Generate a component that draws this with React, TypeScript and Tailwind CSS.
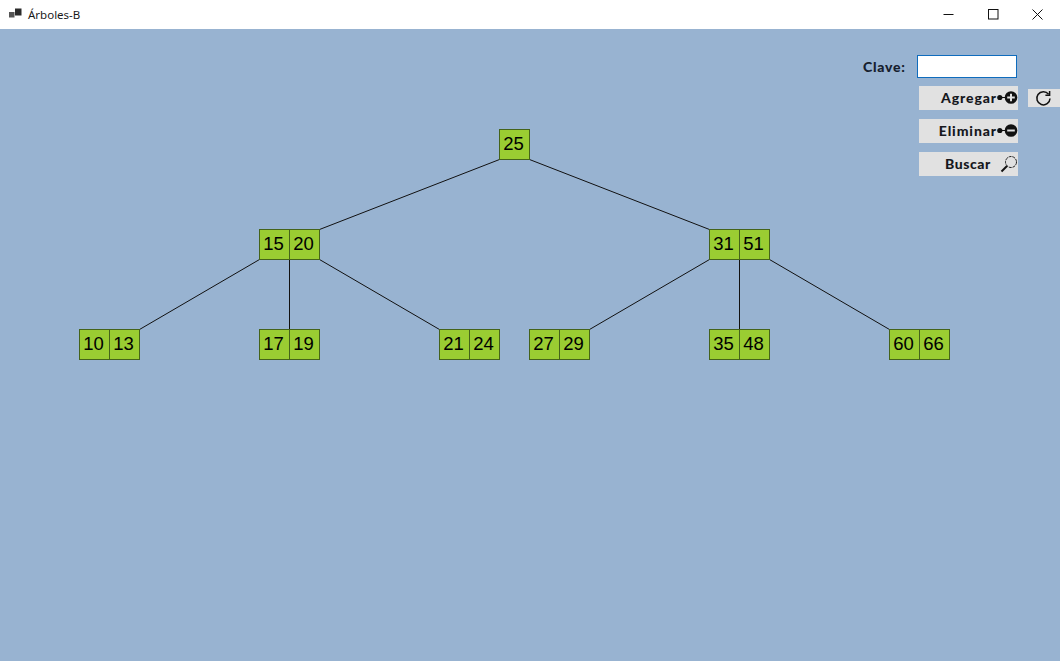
const edges = [
  [499, 159, 319, 229],
  [529, 159, 709, 229],
  [259, 259, 139, 329],
  [289, 259, 289, 329],
  [319, 259, 439, 329],
  [709, 259, 589, 329],
  [739, 259, 739, 329],
  [769, 259, 889, 329],
]

const nodes = [
  { x: 499, y: 129, keys: ['25'] },
  { x: 259, y: 229, keys: ['15', '20'] },
  { x: 709, y: 229, keys: ['31', '51'] },
  { x: 79, y: 329, keys: ['10', '13'] },
  { x: 259, y: 329, keys: ['17', '19'] },
  { x: 439, y: 329, keys: ['21', '24'] },
  { x: 529, y: 329, keys: ['27', '29'] },
  { x: 709, y: 329, keys: ['35', '48'] },
  { x: 889, y: 329, keys: ['60', '66'] },
]

function TitleBar() {
  return (
    <div className="h-[29px] bg-white flex items-center pl-[9px] font-['Noto_Sans',sans-serif] text-[11.5px] text-[#1a1a1a]">
      <svg width="13" height="12" viewBox="0 0 13 12" className="mr-[6px] mb-[1px]">
        <rect x="0" y="4" width="5.5" height="5.5" fill="#555" />
        <rect x="6" y="0.5" width="6.5" height="7" fill="#2b2b2b" />
      </svg>
      <span>Árboles-B</span>
      <div className="ml-auto flex h-full">
        <button className="w-[46px] flex items-center justify-center">
          <svg width="11" height="11" viewBox="0 0 11 11">
            <path d="M0.5 5.5H10.5" stroke="#111" strokeWidth="1" />
          </svg>
        </button>
        <button className="w-[44px] flex items-center justify-center">
          <svg width="11" height="11" viewBox="0 0 11 11">
            <rect x="0.5" y="0.5" width="9.5" height="9.5" fill="none" stroke="#111" strokeWidth="1" />
          </svg>
        </button>
        <button className="w-[45px] flex items-center justify-center">
          <svg width="11" height="11" viewBox="0 0 11 11">
            <path d="M0.5 0.5L10.5 10.5M10.5 0.5L0.5 10.5" stroke="#111" strokeWidth="1" />
          </svg>
        </button>
      </div>
    </div>
  )
}

function DotIcon({ minus }: { minus?: boolean }) {
  return (
    <svg width="21" height="13" viewBox="0 0 21 13">
      <circle cx="2.8" cy="6.5" r="2.6" fill="#111" />
      <path d="M3 6.5H9" stroke="#111" strokeWidth="1" />
      <circle cx="14" cy="6.5" r="6.3" fill="#111" />
      <path d="M10.2 6.5H17.8" stroke="#e1e1e1" strokeWidth="2" />
      {!minus && <path d="M14 2.7V10.3" stroke="#e1e1e1" strokeWidth="2" />}
    </svg>
  )
}

function SearchIcon() {
  return (
    <svg width="18" height="18" viewBox="0 0 18 18">
      <circle cx="11" cy="7" r="5.5" fill="none" stroke="#222" strokeWidth="1" strokeDasharray="3 0.8" />
      <path d="M7 11L1.5 16.5" stroke="#111" strokeWidth="2" />
    </svg>
  )
}

function RefreshIcon() {
  return (
    <svg width="17" height="17" viewBox="0 0 17 17">
      <path d="M13.6 4.2A6.6 6.6 0 1 0 15 8.5" fill="none" stroke="#111" strokeWidth="1.5" />
      <path d="M14.6 1V5.2H10.4" fill="none" stroke="#111" strokeWidth="1.5" />
    </svg>
  )
}

function ActionButton({ label, icon, pad }: { label: string; icon: React.ReactNode; pad: string }) {
  return (
    <button className="w-[99px] h-[24px] pb-[1px] bg-[#e1e1e1] flex items-center justify-end text-[14px] font-black tracking-[0.9px] text-[#16181d]">
      <span className={pad}>{label}</span>
      {icon}
    </button>
  )
}

function Controls() {
  return (
    <div className="ml-auto pt-[26px] flex flex-col items-start font-['Lato',sans-serif] w-[197px]">
      <div className="flex items-center h-[23px]">
        <label className="w-[54px] text-[14px] font-black tracking-[0.75px] text-[#16202e]">Clave:</label>
        <input className="w-[100px] h-[23px] bg-white border border-[#0f6cbd] outline-none" />
      </div>
      <div className="flex items-start mt-[8px] ml-[56px]">
        <ActionButton label="Agregar" icon={<DotIcon />} pad="" />
        <button className="w-[33px] h-[18px] ml-[10px] mt-[3px] bg-[#e1e1e1] flex items-center pl-[7px]">
          <RefreshIcon />
        </button>
      </div>
      <div className="mt-[9px] ml-[56px]">
        <ActionButton label="Eliminar" icon={<DotIcon minus />} pad="" />
      </div>
      <div className="mt-[9px] ml-[56px]">
        <ActionButton label="Buscar" icon={<SearchIcon />} pad="mr-[9px] tracking-[0.6px]" />
      </div>
    </div>
  )
}

export default function App() {
  return (
    <div className="w-[1060px] h-[661px] overflow-hidden flex flex-col bg-[#98b3d1]">
      <TitleBar />
      <div className="flex-1 relative flex">
        <svg className="absolute top-[-29px] left-0" width="1060" height="661">
          {edges.map(([x1, y1, x2, y2], i) => (
            <line key={i} x1={x1 + 0.5} y1={y1 + 0.5} x2={x2 + 0.5} y2={y2 + 0.5} stroke="#111" strokeWidth="1" />
          ))}
        </svg>
        {nodes.map((n) => (
          <div
            key={n.keys.join('-')}
            className="absolute flex"
            style={{ left: n.x, top: n.y - 29 }}
          >
            {n.keys.map((k, i) => (
              <div
                key={k}
                className={`w-[31px] h-[31px] pr-[2px] pb-[1px] bg-[#9acd32] border border-[#44631a] flex items-center justify-center font-['Liberation_Sans',sans-serif] text-[18.5px] text-black ${i > 0 ? 'ml-[-1px]' : ''}`}
              >
                {k}
              </div>
            ))}
          </div>
        ))}
        <Controls />
      </div>
    </div>
  )
}
